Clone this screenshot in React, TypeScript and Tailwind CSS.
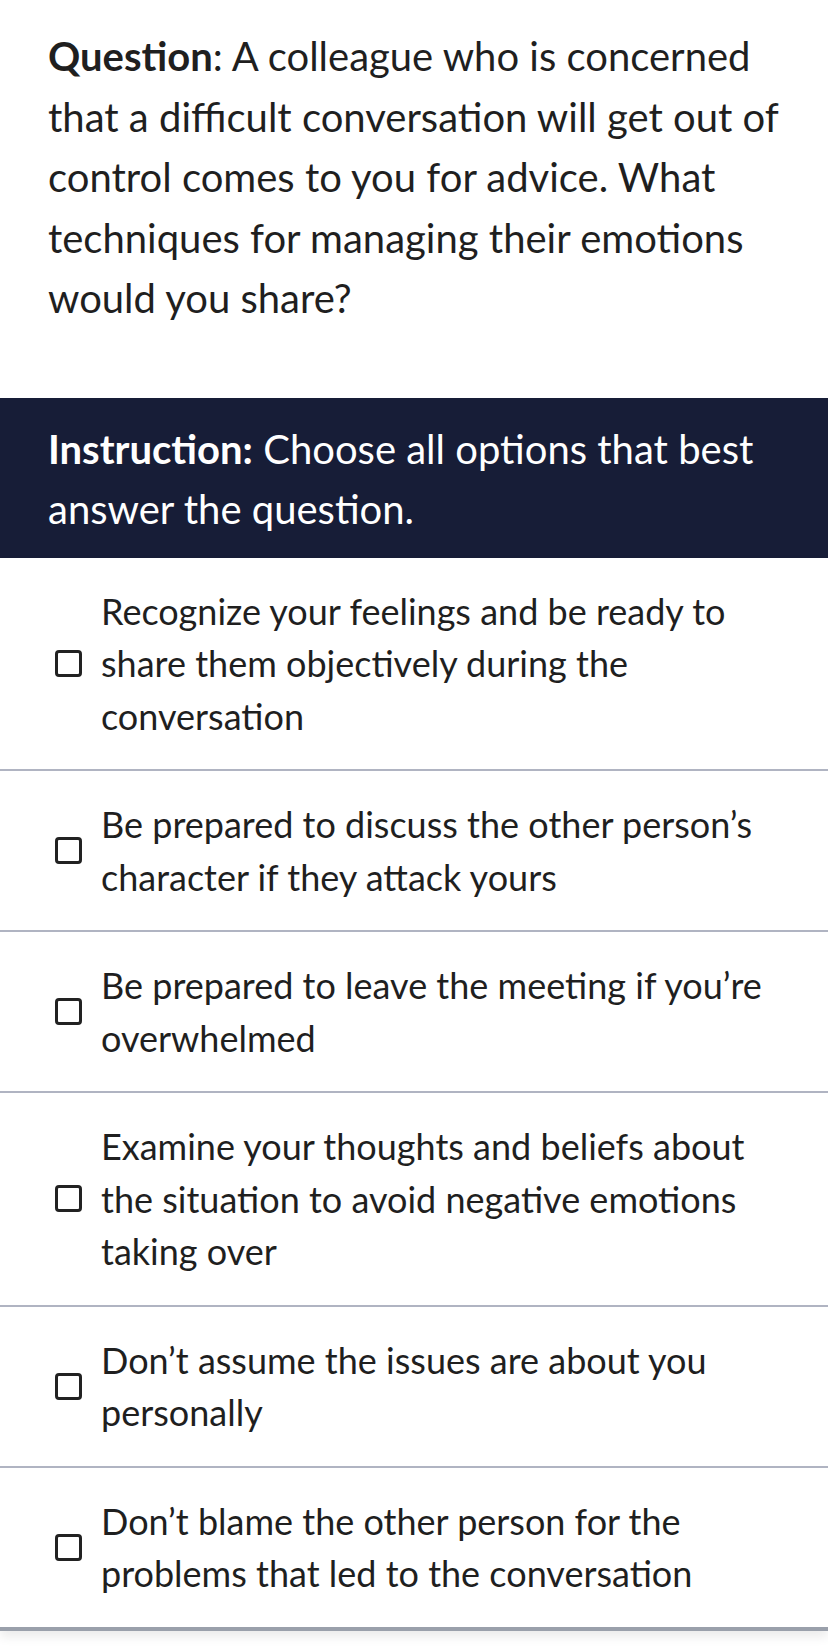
import React from "react";

const opcoes = [
  "Recognize your feelings and be ready to share them objectively during the conversation",
  "Be prepared to discuss the other person’s character if they attack yours",
  "Be prepared to leave the meeting if you’re overwhelmed",
  "Examine your thoughts and beliefs about the situation to avoid negative emotions taking over",
  "Don’t assume the issues are about you personally",
  "Don’t blame the other person for the problems that led to the conversation",
];

export default function App() {
  return (
    <div className="min-h-[1652px] bg-white text-[#1f1f1f] font-['Lato',sans-serif]">
      {/* Pergunta */}
      <div className="pl-[48px] pr-[40px] pt-[26px] pb-[69px] text-[40px] leading-[60.5px]">
        <span className="font-bold">Question</span>: A colleague who is concerned that a difficult
        conversation will get out of control comes to you for advice. What techniques for managing
        their emotions would you share?
      </div>

      {/* Instrução */}
      <div className="bg-[#171d37] text-white pl-[48px] pr-[40px] pt-[21px] pb-[19px] text-[40px] leading-[60px]">
        <span className="font-bold">Instruction:</span> Choose all options that best answer the question.
      </div>

      {/* Opções */}
      <div className="shadow-[0_6px_10px_rgba(0,0,0,0.08)]">
        {opcoes.map((texto, i) => (
          <label
            key={i}
            className={`flex items-center gap-[19px] pl-[55px] pr-[48px] pt-[27px] pb-[27px] ${
              i === opcoes.length - 1
                ? "border-b-[4px] border-[#9aa0ab]"
                : "border-b-2 border-[#b0b4c2]"
            }`}
          >
            <span className="shrink-0 w-[27px] h-[27px] rounded-[4px] border-[3px] border-[#222222]" />
            <span className="text-[36px] leading-[52.5px]">{texto}</span>
          </label>
        ))}
      </div>
    </div>
  );
}
